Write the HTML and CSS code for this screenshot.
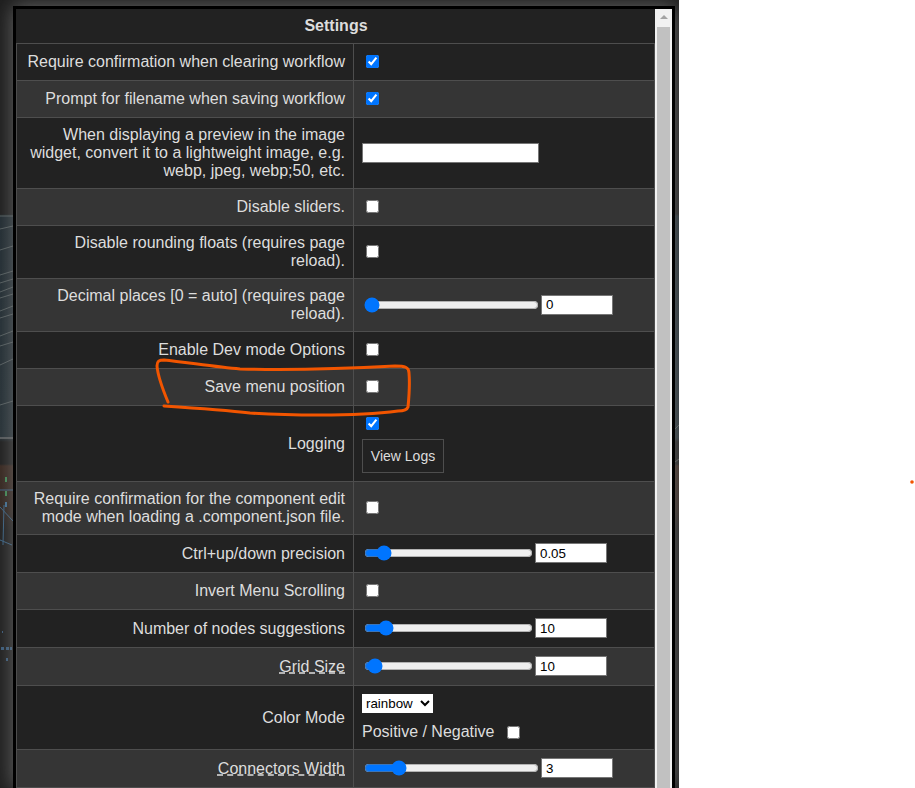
FILE: index.html
```html
<!DOCTYPE html>
<html lang="en">
<head>
    <meta charset="UTF-8">
    <title>Settings</title>
    <link rel="stylesheet" href="styles.css">
</head>
<body>

<div class="backdrop">
    <!-- Scene behind the dialog, only the edges show -->
    <svg class="scene" width="679" height="788" viewBox="0 0 679 788">
        <g stroke="#7d8482" stroke-width="1" fill="none" opacity="0.55">
            <path d="M0 216 L13 216"/>
            <path d="M0 229 L13 226"/>
            <path d="M0 250 L13 246"/>
            <path d="M0 275 L13 271"/>
            <path d="M0 283 L13 279"/>
            <path d="M0 292 L13 287"/>
            <path d="M0 298 L13 294"/>
            <path d="M0 311 L13 306"/>
            <path d="M0 318 L13 314"/>
            <path d="M0 336 L13 331"/>
            <path d="M0 346 L13 342"/>
            <path d="M0 365 L13 359"/>
            <path d="M0 405 L13 401"/>
            <path d="M675 429 L679 425"/>
            <path d="M675 462 L679 459"/>
        </g>
        <path d="M0 438 L13 438" stroke="#777" stroke-width="2" opacity="0.6"/>
        <g stroke="#3f6f96" stroke-width="1" fill="none" opacity="0.85">
            <path d="M0 507 L13 521"/>
            <path d="M4 505 L3 545"/>
            <path d="M0 540 L12 545"/>
            <path d="M0 490 L13 490"/>
        </g>
        <rect x="5" y="477" width="2" height="5" fill="#3f8a55"/>
        <rect x="5" y="491" width="2" height="5" fill="#3f8a55"/>
        <rect x="5" y="502" width="2" height="5" fill="#3f6f96"/>
        <g fill="#3a5c7c">
            <rect x="1" y="647" width="3" height="3"/>
            <rect x="6" y="647" width="3" height="3"/>
            <rect x="10" y="647" width="2" height="3"/>
            <rect x="6" y="658" width="2" height="3"/>
            <rect x="2" y="631" width="1" height="2"/>
        </g>
    </svg>

    <div class="modal">
        <div class="modal-content">
            <table class="settings">
                <colgroup>
                    <col class="name-col">
                    <col>
                </colgroup>
                <thead>
                    <tr><th colspan="2">Settings</th></tr>
                </thead>
                <tbody>
                    <tr>
                        <td class="name">Require confirmation when clearing workflow</td>
                        <td class="value"><input type="checkbox" checked></td>
                    </tr>
                    <tr>
                        <td class="name">Prompt for filename when saving workflow</td>
                        <td class="value"><input type="checkbox" checked></td>
                    </tr>
                    <tr>
                        <td class="name">When displaying a preview in the image widget, convert it to a lightweight image, e.g. webp, jpeg, webp;50, etc.</td>
                        <td class="value"><input type="text" class="text-input"></td>
                    </tr>
                    <tr>
                        <td class="name">Disable sliders.</td>
                        <td class="value"><input type="checkbox"></td>
                    </tr>
                    <tr>
                        <td class="name">Disable rounding floats (requires page reload).</td>
                        <td class="value"><input type="checkbox"></td>
                    </tr>
                    <tr>
                        <td class="name">Decimal places [0 = auto] (requires page reload).</td>
                        <td class="value">
                            <div class="slider-row wide">
                                <input type="range" min="0" max="10" step="1" value="0">
                                <input type="number" value="0">
                            </div>
                        </td>
                    </tr>
                    <tr>
                        <td class="name">Enable Dev mode Options</td>
                        <td class="value"><input type="checkbox"></td>
                    </tr>
                    <tr>
                        <td class="name">Save menu position</td>
                        <td class="value"><input type="checkbox"></td>
                    </tr>
                    <tr>
                        <td class="name nudge">Logging</td>
                        <td class="value">
                            <div class="check-line"><input type="checkbox" checked></div>
                            <button type="button" class="logs-btn">View Logs</button>
                        </td>
                    </tr>
                    <tr>
                        <td class="name">Require confirmation for the component edit mode when loading a .component.json file.</td>
                        <td class="value"><input type="checkbox"></td>
                    </tr>
                    <tr>
                        <td class="name nudge">Ctrl+up/down precision</td>
                        <td class="value">
                            <div class="slider-row">
                                <input type="range" min="0" max="0.66" step="0.01" value="0.05">
                                <input type="text" value="0.05">
                            </div>
                        </td>
                    </tr>
                    <tr>
                        <td class="name">Invert Menu Scrolling</td>
                        <td class="value"><input type="checkbox"></td>
                    </tr>
                    <tr>
                        <td class="name nudge">Number of nodes suggestions</td>
                        <td class="value">
                            <div class="slider-row">
                                <input type="range" min="1" max="100" step="1" value="10">
                                <input type="number" value="10">
                            </div>
                        </td>
                    </tr>
                    <tr>
                        <td class="name nudge"><span class="hint">Grid Size</span></td>
                        <td class="value">
                            <div class="slider-row">
                                <input type="range" min="0" max="500" step="1" value="10">
                                <input type="number" value="10">
                            </div>
                        </td>
                    </tr>
                    <tr>
                        <td class="name nudge">Color Mode</td>
                        <td class="value">
                            <select class="mode-select">
                                <option>rainbow</option>
                            </select>
                            <div class="pos-neg">
                                <span>Positive / Negative</span>
                                <input type="checkbox">
                            </div>
                        </td>
                    </tr>
                    <tr>
                        <td class="name nudge"><span class="hint">Connectors Width</span></td>
                        <td class="value">
                            <div class="slider-row wide">
                                <input type="range" min="0" max="17.4" step="0.1" value="3">
                                <input type="number" value="3">
                            </div>
                        </td>
                    </tr>
                </tbody>
            </table>
        </div>

        <!-- Scrollbar -->
        <div class="scrollbar">
            <div class="scroll-arrow"></div>
            <div class="scroll-thumb"></div>
        </div>
    </div>
</div>

<!-- Hand drawn marks on top of the screenshot -->
<svg class="marks" width="915" height="788" viewBox="0 0 915 788">
    <path d="M168 402 C163 390 158 378 157 366 C157 361 159 360 164 360 C185 362 215 367 240 369 C280 370 340 369 395 366 C405 366 409 367 409 373 C410 385 409 397 408 407 C407 410 404 411 398 411 C375 414 345 415 320 415 C290 415 265 414 250 413 C225 410 195 408 164 406" fill="none" stroke="#f25500" stroke-width="3" stroke-linecap="round" stroke-linejoin="round"/>
    <circle cx="912" cy="482" r="1.8" fill="#f25500"/>
</svg>

</body>
</html>
```

FILE: styles.css
```css
/* Basic Reset */
* {
    margin: 0;
    padding: 0;
    box-sizing: border-box;
}

body {
    position: relative;
    height: 788px;
    overflow: hidden;
    background-color: #fff;
    font-family: "Liberation Sans", Arial, sans-serif;
}

/* Dark page behind the dialog */
.backdrop {
    position: relative;
    width: 679px;
    height: 788px;
    padding: 6px 4px 0 13px;
    overflow: hidden;
    background: linear-gradient(to bottom,
        #1d1d1d 0, #1d1d1d 214px,
        #1f2a30 216px, #253036 438px,
        #1e1e1e 442px, #1e1e1e 464px,
        #38271f 466px, #2e231e 510px,
        #1f1f1f 530px, #1f1f1f 788px);
}

.scene {
    position: absolute;
    top: 0;
    left: 0;
}

/* Settings dialog */
.modal {
    position: relative;
    display: flex;
    height: 782px;
    border: 3px solid #000;
    border-bottom: none;
    background-color: #222;
    box-shadow: 0 0 20px rgba(136, 136, 136, 0.7);
}

.modal-content {
    width: 639px;
    height: 779px;
    flex: none;
    overflow: hidden;
}

.settings {
    width: 639px;
    table-layout: fixed;
    border-collapse: collapse;
    color: #ddd;
    font-size: 16px;
    line-height: 18px;
}

.name-col {
    width: 337px;
}

.settings th {
    height: 34px;
    padding-left: 1px;
    font-size: 16px;
    font-weight: bold;
    text-align: center;
}

.settings td {
    border: 1px solid #4e4e4e;
    padding: 8px;
    height: 37px;
}

.settings thead th {
    border-bottom: 1px solid #4e4e4e;
}

.settings tbody tr:nth-child(even) {
    background-color: #353535;
}

.name {
    text-align: right;
}

/* Labels that sit a pixel lower beside taller controls */
.settings td.nudge {
    padding-top: 10px;
}

.hint {
    text-decoration: underline dashed;
}

.value {
    text-align: left;
}

.value input[type="checkbox"] {
    display: block;
    margin: 0 0 0 4px;
}

.text-input {
    display: block;
    width: 177px;
    height: 20px;
    border: 1px solid #767676;
    background-color: #fff;
}

/* Slider with its number box */
.slider-row {
    display: flex;
    align-items: center;
    height: 21px;
}

.slider-row input[type="range"] {
    width: 169px;
    margin: 0 2px;
    flex: none;
}

.slider-row.wide input[type="range"] {
    width: 175px;
}

.slider-row input[type="number"],
.slider-row input[type="text"] {
    width: 72px;
    height: 20px;
    padding: 0 4px;
    border: 1px solid #767676;
    font-family: "Liberation Sans", Arial, sans-serif;
    font-size: 13.33px;
    color: #000;
    background-color: #fff;
    appearance: textfield;
}

.check-line {
    padding-top: 3px;
    height: 25px;
}

.logs-btn {
    display: block;
    width: 82px;
    height: 34px;
    border: 1px solid #4e4e4e;
    background-color: #222;
    color: #ddd;
    font-family: "Liberation Sans", Arial, sans-serif;
    font-size: 14px;
}

.mode-select {
    display: block;
    width: 71px;
    height: 19px;
    font-family: "Liberation Sans", Arial, sans-serif;
    font-size: 13.33px;
    background-color: #fff;
    color: #000;
    border: none;
}

.pos-neg {
    display: flex;
    align-items: center;
    height: 19px;
    margin-top: 10px;
    margin-bottom: -1px;
}

.pos-neg input[type="checkbox"] {
    margin-left: 12px;
}

/* Fake scrollbar on the right of the dialog */
.scrollbar {
    width: 17px;
    height: 779px;
    flex: none;
    padding: 0 2px;
    overflow: hidden;
    background-color: #f1f1f1;
}

.scroll-arrow {
    width: 0;
    height: 0;
    margin: 6px auto 8px;
    border-left: 4px solid transparent;
    border-right: 4px solid transparent;
    border-bottom: 4px solid #a3a3a3;
}

.scroll-thumb {
    height: 100%;
    background-color: #c1c1c1;
}

/* Annotation layer */
.marks {
    position: absolute;
    top: 0;
    left: 0;
    pointer-events: none;
}
```
